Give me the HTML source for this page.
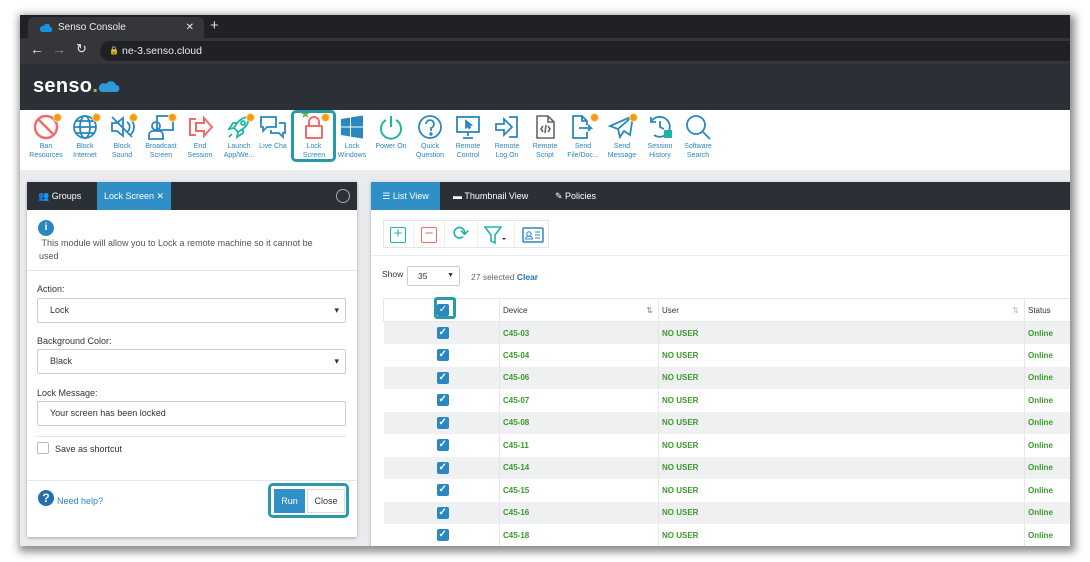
<!DOCTYPE html>
<html><head><meta charset="utf-8"><style>
*{box-sizing:border-box;margin:0;padding:0}
body{width:1090px;height:562px;background:#fff;font-family:"Liberation Sans",sans-serif;position:relative;overflow:hidden}
.frame{position:absolute;left:20px;top:15px;width:1050px;height:531px;background:#e9ebee;box-shadow:2px 3px 8px 3px rgba(0,0,0,.45);overflow:hidden}
.tabs{position:absolute;left:0;top:0;width:100%;height:23px;background:#202124}
.tab{position:absolute;left:8px;top:2px;width:176px;height:21px;background:#35363a;border-radius:6px 6px 0 0;color:#e8eaed;font-size:10px;line-height:21px;padding-left:30px}
.addr{position:absolute;left:0;top:23px;width:100%;height:26px;background:#35363a;color:#e8eaed}
.url{position:absolute;left:80px;top:3px;width:980px;height:20px;background:#202124;border-radius:10px;font-size:10.5px;line-height:20px;padding-left:22px}
.hdr{position:absolute;left:0;top:49px;width:100%;height:46px;background:#2b3036}
.logo{position:absolute;left:13px;top:11px;color:#fff;font-size:20px;font-weight:bold;letter-spacing:.3px}
.tb{position:absolute;left:0;top:95px;width:100%;height:60px;background:#fff}
.it{position:absolute;top:3px;width:40px;text-align:center;font-size:7px;line-height:9px;color:#2b87c0}
.it svg{display:block;margin:0 auto 1px;width:28px;height:28px}
.badge{position:absolute;top:0;right:4px;width:9px;height:9px;border-radius:50%;background:#f39c12;border:1.5px solid #fde3b0}
.panel{position:absolute;background:#fff;box-shadow:0 1px 3px rgba(0,0,0,.3)}
.ph{height:28px;background:#2b3036;color:#fff;font-size:9px;line-height:28px;position:relative}
.lbl{font-size:9px;color:#333;position:absolute;left:10px}
.sel{position:absolute;left:10px;width:309px;height:25px;border:1px solid #ccc;border-radius:2px;font-size:9px;line-height:23px;padding-left:12px;color:#333}
.dd:after{content:"▾";position:absolute;right:6px;top:0;font-size:9px}
table{border-collapse:collapse;position:absolute;left:12px;top:116px;width:700px;font-size:8px}
td{height:22.5px;border-right:1px solid #e4e6e8;padding-left:3px;font-weight:bold;color:#3a9a2a}
tr:nth-child(even) td{background:#eef0f2}
th{height:23px;text-align:left;font-weight:normal;color:#333;border:1px solid #e4e6e8;padding-left:3px;font-size:8px}
.cb{display:inline-block;width:12px;height:12px;background:#2b87c0;border-radius:2px;color:#fff;font-size:10px;line-height:12px;text-align:center}
</style></head><body>
<div class="frame">
 <div class="tabs"><div class="tab"><svg style="position:absolute;left:12px;top:7px" width="12" height="8"><path d="M2 8h8a2.5 2.5 0 0 0 0-5 3 3 0 0 0-6-1 2.5 2.5 0 0 0-2 6z" fill="#1a8fe0"/></svg>Senso Console<span style="position:absolute;right:10px;top:0">✕</span></div><span style="position:absolute;left:190px;top:2px;color:#ddd;font-size:15px">+</span></div>
 <div class="addr"><span style="position:absolute;left:10px;top:3px;font-size:14px">←</span><span style="position:absolute;left:32px;top:3px;font-size:14px;color:#888">→</span><span style="position:absolute;left:56px;top:3px;font-size:13px">↻</span><div class="url"><span style="position:absolute;left:9px;font-size:8px">🔒</span>ne-3.senso.cloud</div></div>
 <div class="hdr"><div class="logo">senso<span style="color:#8bc34a">.</span><svg width="22" height="13" style="vertical-align:middle"><path d="M3 12h15a3.5 3.5 0 0 0 0-7 5.5 5.5 0 0 0-10-1 4 4 0 0 0-5 8z" fill="#2b9ad6"/></svg></div></div>
 <div class="tb">
  <div class="it" style="left:6px"><svg viewBox="0 0 28 28"><circle cx="14" cy="14" r="11" fill="none" stroke="#f26b6b" stroke-width="2.5"/><path d="M6 6l16 16" stroke="#f26b6b" stroke-width="2.5"/></svg>Ban<br>Resources<span class="badge"></span></div>
  <div class="it" style="left:45px"><svg viewBox="0 0 28 28" fill="none" stroke="#2b87c0" stroke-width="1.8"><circle cx="14" cy="14" r="11"/><ellipse cx="14" cy="14" rx="5" ry="11"/><path d="M3 14h22M5 8h18M5 20h18"/></svg>Block<br>Internet<span class="badge"></span></div>
  <div class="it" style="left:82px"><svg viewBox="0 0 28 28" fill="none" stroke="#2b87c0" stroke-width="1.8"><path d="M4 10h5l6-5v18l-6-5H4zM19 9a6 6 0 0 1 0 10M22 6a10 10 0 0 1 0 16M4 4l20 20"/></svg>Block<br>Sound<span class="badge"></span></div>
  <div class="it" style="left:121px"><svg viewBox="0 0 28 28" fill="none" stroke="#2b87c0" stroke-width="1.8"><rect x="10" y="3" width="16" height="14"/><circle cx="9" cy="13" r="4"/><path d="M2 26v-4a4 4 0 0 1 4-4h6a4 4 0 0 1 4 4v4z"/></svg>Broadcast<br>Screen<span class="badge"></span></div>
  <div class="it" style="left:160px"><svg viewBox="0 0 28 28" fill="none" stroke="#f26b6b" stroke-width="2"><path d="M10 6H4v16h6M10 10h8V5l8 9-8 9v-5h-8z"/></svg>End<br>Session</div>
  <div class="it" style="left:199px"><svg viewBox="0 0 28 28" fill="none" stroke="#1fb5a5" stroke-width="1.8"><path d="M24 4c-7 0-12 5-15 11l4 4c6-3 11-8 11-15zM9 15l-5 1 4-6h5M13 19l-1 5 6-4v-5M7 21l-3 3"/><circle cx="18" cy="10" r="2"/></svg>Launch<br>App/We...<span class="badge"></span></div>
  <div class="it" style="left:236px;width:34px"><svg viewBox="0 0 28 28" fill="none" stroke="#2b87c0" stroke-width="1.8"><path d="M2 4h15v10H8l-4 4v-4H2zM20 10h6v10h-2v4l-4-4h-8v-3"/></svg>Live Cha</div>
  <div class="it" style="left:274px"><svg viewBox="0 0 28 28" fill="none" stroke="#f26b6b" stroke-width="2"><rect x="6" y="13" width="16" height="12" rx="1"/><path d="M9 13V9a5 5 0 0 1 10 0v4"/></svg>Lock<br>Screen<span class="badge"></span><span style="position:absolute;left:6px;top:-3px;color:#6cb33f;font-size:12px">★</span></div>
  <div style="position:absolute;left:271px;top:0;width:45px;height:52px;border:3px solid #2a9aa8;border-radius:5px"></div>
  <div class="it" style="left:312px"><svg viewBox="0 0 28 28" fill="#2b87c0"><path d="M3 6l9-1.5v9H3zM13 4.3 25 2.5v11H13zM3 14.5h9v9L3 22zM13 14.5h12v11l-12-1.8z"/></svg>Lock<br>Windows</div>
  <div class="it" style="left:351px"><svg viewBox="0 0 28 28" fill="none" stroke="#1fb5a5" stroke-width="2"><path d="M9 7a10 10 0 1 0 10 0M14 3v11"/></svg>Power On</div>
  <div class="it" style="left:390px"><svg viewBox="0 0 28 28" fill="none" stroke="#2b87c0" stroke-width="1.8"><circle cx="14" cy="14" r="11"/><path d="M10 11a4 4 0 1 1 5 4v3"/><circle cx="15" cy="21" r=".8"/></svg>Quick<br>Question</div>
  <div class="it" style="left:428px"><svg viewBox="0 0 28 28" fill="none" stroke="#2b87c0" stroke-width="1.8"><rect x="3" y="4" width="22" height="15"/><path d="M14 19v4M9 25h10"/><path d="M12 8l5 4-2 .5 1 2-1 .5-1-2-2 1.5z" fill="#2b87c0"/></svg>Remote<br>Control</div>
  <div class="it" style="left:467px"><svg viewBox="0 0 28 28" fill="none" stroke="#2b87c0" stroke-width="1.8"><path d="M16 4h8v20h-8M3 11h8V6l8 8-8 8v-5H3z"/></svg>Remote<br>Log On</div>
  <div class="it" style="left:505px"><svg viewBox="0 0 28 28" fill="none" stroke="#666" stroke-width="1.6"><path d="M6 3h11l6 6v16H6zM17 3v6h6M12 13l-2 3 2 3M17 13l2 3-2 3M15 12l-1 8"/></svg>Remote<br>Script</div>
  <div class="it" style="left:543px"><svg viewBox="0 0 28 28" fill="none" stroke="#2b87c0" stroke-width="1.8"><path d="M18 12V8l-5-5H4v22h14v-6M13 3v5h5M10 15h12l-3-3M22 15l-3 3"/></svg>Send<br>File/Doc...<span class="badge"></span></div>
  <div class="it" style="left:582px"><svg viewBox="0 0 28 28" fill="none" stroke="#2b87c0" stroke-width="1.8"><path d="M25 3 2 13l8 3 2 8 4-6 6 4zM10 16 25 3"/></svg>Send<br>Message<span class="badge"></span></div>
  <div class="it" style="left:620px"><svg viewBox="0 0 28 28" fill="none" stroke="#2b87c0" stroke-width="1.8"><path d="M5 9a10 10 0 1 1 3 13M5 4v5h5M14 8v6l4 2"/><rect x="18" y="17" width="8" height="8" fill="#1fb5a5" stroke="none"/></svg>Session<br>History</div>
  <div class="it" style="left:658px"><svg viewBox="0 0 28 28" fill="none" stroke="#2b87c0" stroke-width="1.8"><circle cx="12" cy="12" r="9"/><path d="M19 19l7 7"/></svg>Software<br>Search</div>
 </div>
 <div class="panel" style="left:7px;top:167px;width:330px;height:355px">
  <div class="ph"><span style="margin-left:11px">👥 Groups</span><span style="position:absolute;left:70px;top:0;width:74px;height:28px;background:#2f8fc6;text-align:center">Lock Screen ✕</span><span style="position:absolute;right:7px;top:7px;width:14px;height:14px;border:1px solid #aaa;border-radius:50%"></span></div>
  <div style="position:absolute;left:11px;top:38px;width:16px;height:16px;border-radius:50%;background:#2b87c0;color:#fff;font-size:10px;font-weight:bold;text-align:center;line-height:16px">i</div>
  <div style="position:absolute;left:12px;top:55px;width:290px;font-size:9px;line-height:13px;color:#555">&nbsp;This module will allow you to Lock a remote machine so it cannot be used</div>
  <div style="position:absolute;left:0;top:88px;width:100%;border-top:1px solid #e5e5e5"></div>
  <div class="lbl" style="top:102px">Action:</div>
  <div class="sel dd" style="top:116px">Lock</div>
  <div class="lbl" style="top:154px">Background Color:</div>
  <div class="sel dd" style="top:167px">Black</div>
  <div class="lbl" style="top:206px">Lock Message:</div>
  <div class="sel" style="top:219px">Your screen has been locked</div>
  <div style="position:absolute;left:10px;top:254px;width:309px;border-top:1px solid #e5e5e5"></div>
  <div style="position:absolute;left:10px;top:260px;width:12px;height:12px;border:1px solid #bbb;border-radius:2px"></div>
  <div class="lbl" style="left:28px;top:262px">Save as shortcut</div>
  <div style="position:absolute;left:0;top:298px;width:100%;border-top:1px solid #e5e5e5"></div>
  <div style="position:absolute;left:11px;top:308px;width:16px;height:16px;border-radius:50%;background:#2170b0;color:#fff;font-weight:bold;font-size:12px;text-align:center;line-height:16px">?</div>
  <div style="position:absolute;left:30px;top:314px;font-size:9px;color:#2b87c0">Need help?</div>
  <div style="position:absolute;left:241px;top:301px;width:81px;height:35px;border:3px solid #2a9aa8;border-radius:5px"></div>
  <div style="position:absolute;left:247px;top:307px;width:31px;height:24px;background:#2f8fc6;color:#fff;font-size:9px;text-align:center;line-height:24px">Run</div>
  <div style="position:absolute;left:280px;top:307px;width:38px;height:24px;border:1px solid #ddd;color:#333;font-size:9px;text-align:center;line-height:22px">Close</div>
 </div>
 <div class="panel" style="left:351px;top:167px;width:710px;height:370px">
  <div class="ph" style="font-size:9px"><span style="position:absolute;left:0;top:0;width:69px;height:28px;background:#2f8fc6;text-align:center">☰ List View</span><span style="position:absolute;left:82px">▬ Thumbnail View</span><span style="position:absolute;left:184px">✎ Policies</span></div>
  <div style="position:absolute;left:12px;top:38px;width:166px;height:28px;border:1px solid #e5e5e5;display:flex">
   <div style="width:30px;border-right:1px solid #eee;position:relative"><span style="position:absolute;left:6px;top:6px;width:16px;height:16px;border:1.5px solid #1fb5a5;border-radius:2px;color:#1fb5a5;font-size:15px;line-height:12px;text-align:center">+</span></div>
   <div style="width:31px;border-right:1px solid #eee;position:relative"><span style="position:absolute;left:7px;top:6px;width:16px;height:16px;border:1.5px solid #f26b6b;border-radius:2px;color:#f26b6b;font-size:15px;line-height:12px;text-align:center">−</span></div>
   <div style="width:33px;border-right:1px solid #eee;color:#1fb5a5;font-size:20px;text-align:center;line-height:26px">⟳</div>
   <div style="width:37px;border-right:1px solid #eee;position:relative"><svg width="24" height="20" style="position:absolute;left:5px;top:4px"><path d="M2 2h16l-6 8v8l-4-2v-6z" fill="none" stroke="#1fb5a5" stroke-width="1.6"/><path d="M19 13h4l-2 2z" fill="#333"/></svg></div>
   <div style="flex:1;position:relative"><svg width="22" height="16" style="position:absolute;left:7px;top:6px"><rect x="1" y="1" width="20" height="14" rx="1" fill="none" stroke="#2b87c0" stroke-width="1.5"/><circle cx="7" cy="7" r="2.2" fill="none" stroke="#2b87c0"/><path d="M3.5 12a3.5 3 0 0 1 7 0zM13 5h5M13 8h5M13 11h5" stroke="#2b87c0" fill="none"/></svg></div>
  </div>
  <div style="position:absolute;left:0;top:73px;width:100%;border-top:1px solid #eee"></div>
  <div style="position:absolute;left:11px;top:87px;font-size:8.5px;color:#333">Show</div>
  <div style="position:absolute;left:36px;top:84px;width:53px;height:20px;border:1px solid #ccc;border-radius:2px;font-size:8.5px;line-height:18px;padding-left:10px;color:#333">35<span style="position:absolute;right:5px;font-size:7px">▼</span></div>
  <div style="position:absolute;left:100px;top:90px;font-size:8.5px;color:#666">27 selected <b style="color:#2b6fa8">Clear</b></div>
  <table>
   <tr><th style="width:116px;text-align:center;position:relative"><span class="cb">✓</span><span style="position:absolute;left:50px;top:-2px;width:22px;height:22px;border:3px solid #2a9aa8;border-radius:3px"></span></th><th style="width:159px">Device<span style="float:right;margin-right:5px;color:#888">⇅</span></th><th style="width:366px">User<span style="float:right;margin-right:5px;color:#bbb">⇅</span></th><th>Status</th></tr>
   <tr><td style="text-align:center"><span class="cb">✓</span></td><td>C45-03</td><td>NO USER</td><td>Online</td></tr>
   <tr><td style="text-align:center"><span class="cb">✓</span></td><td>C45-04</td><td>NO USER</td><td>Online</td></tr>
   <tr><td style="text-align:center"><span class="cb">✓</span></td><td>C45-06</td><td>NO USER</td><td>Online</td></tr>
   <tr><td style="text-align:center"><span class="cb">✓</span></td><td>C45-07</td><td>NO USER</td><td>Online</td></tr>
   <tr><td style="text-align:center"><span class="cb">✓</span></td><td>C45-08</td><td>NO USER</td><td>Online</td></tr>
   <tr><td style="text-align:center"><span class="cb">✓</span></td><td>C45-11</td><td>NO USER</td><td>Online</td></tr>
   <tr><td style="text-align:center"><span class="cb">✓</span></td><td>C45-14</td><td>NO USER</td><td>Online</td></tr>
   <tr><td style="text-align:center"><span class="cb">✓</span></td><td>C45-15</td><td>NO USER</td><td>Online</td></tr>
   <tr><td style="text-align:center"><span class="cb">✓</span></td><td>C45-16</td><td>NO USER</td><td>Online</td></tr>
   <tr><td style="text-align:center"><span class="cb">✓</span></td><td>C45-18</td><td>NO USER</td><td>Online</td></tr>
  </table>
 </div>
</div>
</body></html>
